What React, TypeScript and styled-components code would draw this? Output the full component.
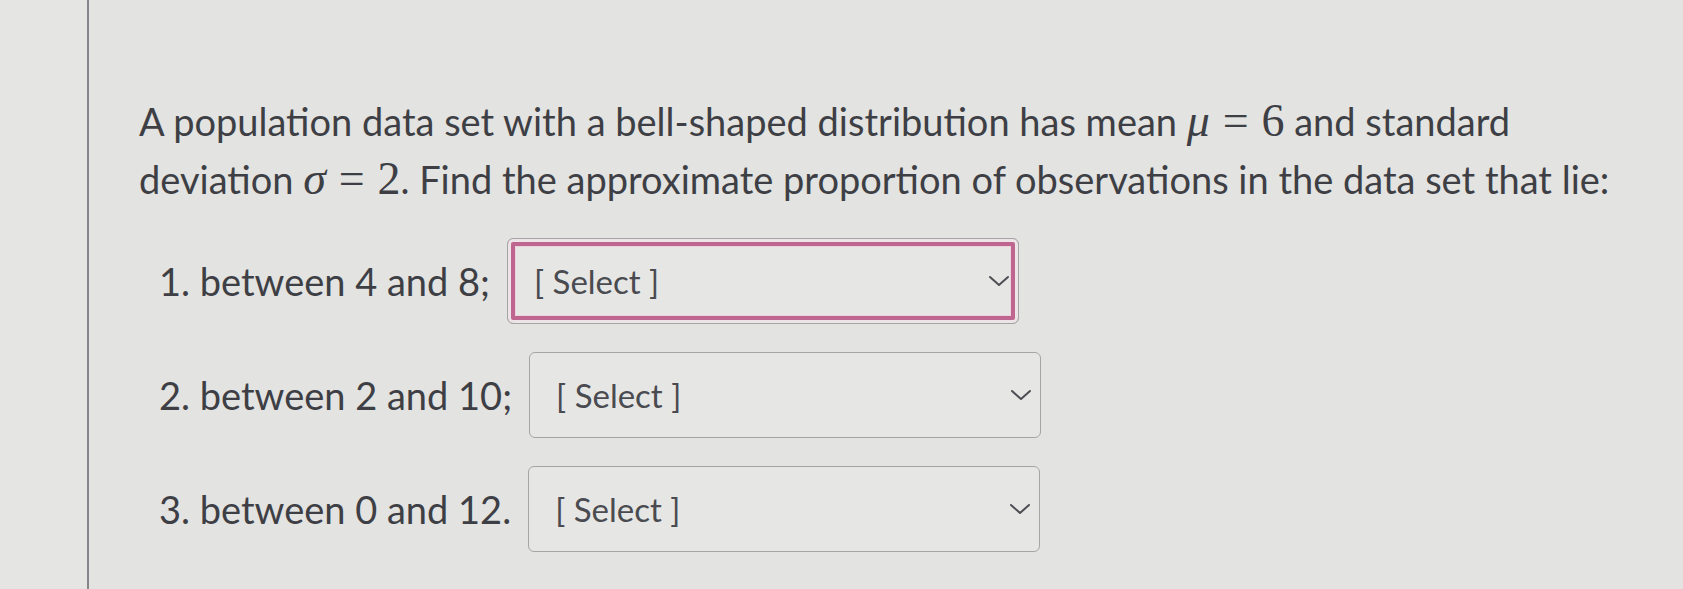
import React from 'react'
import styled, { createGlobalStyle } from 'styled-components'

const GlobalStyle = createGlobalStyle`
    html, body {
        margin: 0;
        padding: 0;
        background: #e3e3e1;
    }
    body {
        font-family: Lato, "Open Sans", sans-serif;
        color: #3e3f45;
    }
`

const Page = styled.div`
    display: flex;
    width: 100%;
    min-height: 589px;
    overflow: hidden;
`

const Gutter = styled.div`
    width: 87px;
    flex-shrink: 0;
    background: #e5e5e3;
    border-right: 2px solid #85868a;
`

const Main = styled.main`
    flex: 1;
    padding: 92px 0 0 50px;
`

const Question = styled.p`
    margin: 0;
    font-size: 38px;
    line-height: 58px;
    max-width: 1515px;
`

const MathText = styled.span`
    font-family: "Liberation Serif", "DejaVu Serif", serif;
    font-size: 1.21em;
    line-height: 58px;
`

const MathVar = styled.i`
    font-style: italic;
`

const MathOp = styled.span`
    margin: 0 0.28em;
`

const List = styled.ol`
    list-style: none;
    margin: 30px 0 0 0;
    padding: 0 0 0 20px;
    display: flex;
    flex-direction: column;
    gap: 28px;
`

const Row = styled.li`
    display: flex;
    align-items: center;
    font-size: 38px;
`

const Label = styled.span`
    margin-right: 17px;
    white-space: nowrap;
`

const SelectBox = styled.div<{ $focused?: boolean }>`
    box-sizing: border-box;
    width: 512px;
    height: 86px;
    display: flex;
    align-items: center;
    justify-content: space-between;
    padding: 0 8px 0 26px;
    border: 1.5px solid #a4a5a7;
    border-radius: 6px;
    background: #e6e6e4;
    font-size: 33px;
    color: #4a4b50;
    box-shadow: ${({ $focused }) =>
        $focused
            ? 'inset 0 0 0 3px #ece4e6, inset 0 0 0 7px #bf6690, inset 0 0 0 8px #eed3de'
            : 'none'};
`

const Chevron = () => (
    <svg width="22" height="12" viewBox="0 0 22 12" fill="none">
        <path
            d="M2 2 L11 10 L20 2"
            stroke="#4d4e53"
            strokeWidth="2"
            strokeLinecap="round"
            strokeLinejoin="round"
        />
    </svg>
)

const items = [
    { label: '1. between 4 and 8;', focused: true },
    { label: '2. between 2 and 10;', focused: false },
    { label: '3. between 0 and 12.', focused: false },
]

export default function App() {
    return (
        <>
            <GlobalStyle />
            <Page>
                <Gutter />
                <Main>
                    <Question>
                        A population data set with a bell-shaped distribution
                        has mean{' '}
                        <MathText>
                            <MathVar>μ</MathVar>
                            <MathOp>=</MathOp>6
                        </MathText>{' '}
                        and standard deviation{' '}
                        <MathText>
                            <MathVar>σ</MathVar>
                            <MathOp>=</MathOp>2
                        </MathText>
                        . Find the approximate proportion of observations in the
                        data set that lie:
                    </Question>
                    <List>
                        {items.map((item) => (
                            <Row key={item.label}>
                                <Label>{item.label}</Label>
                                <SelectBox $focused={item.focused}>
                                    <span>[ Select ]</span>
                                    <Chevron />
                                </SelectBox>
                            </Row>
                        ))}
                    </List>
                </Main>
            </Page>
        </>
    )
}
